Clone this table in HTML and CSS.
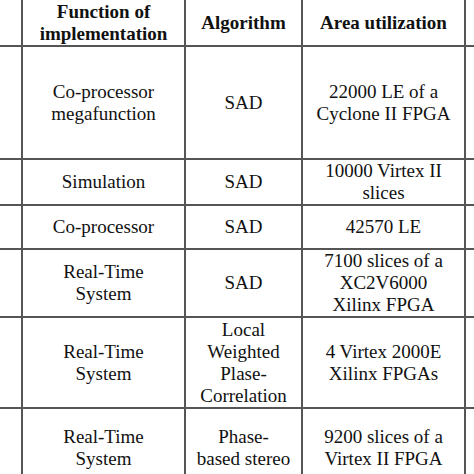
FILE: index.html
```html
<!DOCTYPE html>
<html>
<head>
<meta charset="utf-8">
<link rel="stylesheet" href="styles.css">
</head>
<body>
<div class="viewport">
<table class="tbl">
  <colgroup>
    <col class="c-a"><col class="c-b"><col class="c-c"><col class="c-d"><col class="c-e">
  </colgroup>
  <tr class="r-head">
    <th></th>
    <th>Function of<br>implementation</th>
    <th>Algorithm</th>
    <th>Area utilization</th>
    <th></th>
  </tr>
  <tr class="r1">
    <td class="side side-w"><span class="frag">w</span></td>
    <td>Co-processor<br>megafunction</td>
    <td>SAD</td>
    <td>22000 LE of a<br>Cyclone II FPGA</td>
    <td></td>
  </tr>
  <tr class="r2">
    <td class="side"></td>
    <td>Simulation</td>
    <td>SAD</td>
    <td>10000 Virtex II<br>slices</td>
    <td></td>
  </tr>
  <tr class="r3">
    <td class="side"></td>
    <td>Co-processor</td>
    <td>SAD</td>
    <td>42570 LE</td>
    <td></td>
  </tr>
  <tr class="r4">
    <td class="side"></td>
    <td>Real-Time<br>System</td>
    <td>SAD</td>
    <td>7100 slices of a<br>XC2V6000<br>Xilinx FPGA</td>
    <td></td>
  </tr>
  <tr class="r5">
    <td class="side side-a">FPGA</td>
    <td>Real-Time<br>System</td>
    <td>Local<br>Weighted<br>Plase-<br>Correlation</td>
    <td>4 Virtex 2000E<br>Xilinx FPGAs</td>
    <td></td>
  </tr>
  <tr class="r6">
    <td class="side"></td>
    <td>Real-Time<br>System</td>
    <td>Phase-<br>based stereo</td>
    <td>9200 slices of a<br>Virtex II FPGA</td>
    <td></td>
  </tr>
</table>
</div>
</body>
</html>
```
FILE: styles.css
```css
html, body {
  margin: 0;
  padding: 0;
  background: #ffffff;
}
.viewport {
  width: 474px;
  height: 474px;
  overflow: hidden;
  position: relative;
}
.tbl {
  border-collapse: collapse;
  table-layout: fixed;
  width: 685px;
  margin-left: -101px;
  margin-top: -2px;
  font-family: "Liberation Serif", "Times New Roman", serif;
  font-size: 19px;
  line-height: 22px;
  color: #111111;
}
.c-a { width: 122px; }
.c-b { width: 163px; }
.c-c { width: 117px; }
.c-d { width: 163px; }
.c-e { width: 120px; }
.tbl th, .tbl td {
  font-family: "Liberation Serif", "Times New Roman", serif;
  border: 2px solid #555555;
  text-align: center;
  vertical-align: middle;
  padding: 0;
}
.tbl th {
  font-weight: bold;
}
.r-head { height: 47px; }
.r1 { height: 113px; }
.r2 { height: 45px; }
.r3 { height: 44px; }
.r4 { height: 68px; }
.r5 { height: 91px; }
.r6 { height: 80px; }
.side {
  text-align: right;
  padding-right: 13px;
}
.side-w {
  vertical-align: bottom;
  padding-bottom: 2px;
}
.side-w .frag {
  font-style: italic;
  font-size: 15px;
}
.side-a {
  vertical-align: top;
  padding-top: 24px;
}
```
